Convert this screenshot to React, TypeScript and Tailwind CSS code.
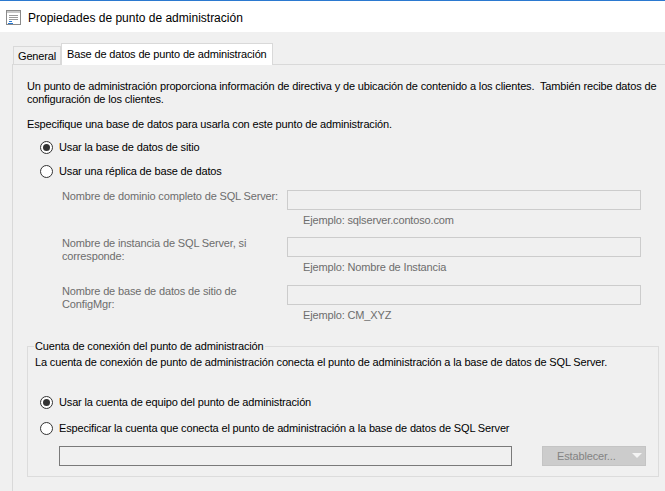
import React from 'react';

function Radio({ checked, label }: { checked?: boolean; label: string }) {
  return (
    <div className="flex items-center h-[16px]">
      <span className="w-[13px] h-[13px] rounded-full border border-[#333333] bg-white flex items-center justify-center shrink-0">
        {checked && <span className="w-[7px] h-[7px] rounded-full bg-[#333333]" />}
      </span>
      <span className="ml-[6px] leading-[13px]">{label}</span>
    </div>
  );
}

function DbRow({ label, example, className }: { label: React.ReactNode; example: string; className?: string }) {
  return (
    <div className={'flex items-start ml-[35px] ' + (className || '')}>
      <div className="w-[225px] leading-[13px] text-[#6d6d6d]">{label}</div>
      <div className="flex flex-col">
        <div className="w-[354px] h-[20px] border border-[#cccccc] bg-[#f0f0f0]" />
        <div className="mt-[4px] ml-[16px] leading-[13px] text-[#6d6d6d]">{example}</div>
      </div>
    </div>
  );
}

export default function App() {
  return (
    <div className="w-[665px] h-[491px] overflow-hidden bg-[#f0f0f0] text-black text-[11px] tracking-[-0.15px] font-['Liberation_Sans',Arial,sans-serif]">
      {/* barra de titulo */}
      <div className="h-[32px] bg-white border-t border-[#2b79d0] flex items-center pl-[6px]">
        <svg width="15" height="15" viewBox="0 0 15 15" className="mt-[1px]">
          <rect x="0.5" y="0.5" width="14" height="14" fill="#ffffff" stroke="#8a8a8a" />
          <rect x="1" y="1" width="13" height="2" fill="#c8c8c8" />
          <rect x="3" y="5" width="9" height="1" fill="#9a9a9a" />
          <rect x="3" y="7" width="9" height="1" fill="#9a9a9a" />
          <rect x="3" y="9" width="9" height="1" fill="#9a9a9a" />
          <rect x="3" y="11" width="3" height="1" fill="#2b79d0" />
          <rect x="2" y="13" width="5" height="1" fill="#2b79d0" />
        </svg>
        <span className="ml-[7px] text-[12px] tracking-normal leading-[14px] mt-[2px]">
          Propiedades de punto de administración
        </span>
      </div>

      {/* pestañas */}
      <div className="pt-[11px] pl-[13px] flex items-end">
        <div className="h-[18px] px-[4px] border border-b-0 border-[#d9d9d9] flex items-center leading-[13px] pt-[2px]">
          General
        </div>
        <div className="relative z-10 -mb-px h-[22px] px-[5px] bg-white border border-b-0 border-[#d9d9d9] flex items-center leading-[13px] pb-[1px]">
          Base de datos de punto de administración
        </div>
      </div>

      {/* panel */}
      <div className="ml-[12px] border-l border-t border-[#d9d9d9] h-[440px] pl-[14px] pt-[15px]">
        <p className="leading-[13px]">
          Un punto de administración proporciona información de directiva y de ubicación de contenido a los clientes.&nbsp; También recibe datos de
          <br />
          configuración de los clientes.
        </p>
        <p className="mt-[12px] leading-[13px]">Especifique una base de datos para usarla con este punto de administración.</p>

        <div className="mt-[8px] ml-[13px] flex flex-col gap-[8px]">
          <Radio checked label="Usar la base de datos de sitio" />
          <Radio label="Usar una réplica de base de datos" />
        </div>

        <DbRow className="mt-[11px]" label="Nombre de dominio completo de SQL Server:" example="Ejemplo: sqlserver.contoso.com" />
        <DbRow
          className="mt-[10px]"
          label={<>Nombre de instancia de SQL Server, si<br />corresponde:</>}
          example="Ejemplo: Nombre de Instancia"
        />
        <DbRow
          className="mt-[11px]"
          label={<>Nombre de base de datos de sitio de<br />ConfigMgr:</>}
          example="Ejemplo: CM_XYZ"
        />

        <fieldset className="mt-[18px] w-[632px] border border-[#dcdcdc] pl-[7px] pb-[10px]">
          <legend className="-ml-[1px] px-[1px] leading-[13px]">Cuenta de conexión del punto de administración</legend>
          <p className="mt-[3px] leading-[13px]">
            La cuenta de conexión de punto de administración conecta el punto de administración a la base de datos de SQL Server.
          </p>
          <div className="mt-[25px] ml-[5px] flex flex-col gap-[10px]">
            <Radio checked label="Usar la cuenta de equipo del punto de administración" />
            <Radio label="Especificar la cuenta que conecta el punto de administración a la base de datos de SQL Server" />
          </div>
          <div className="mt-[10px] ml-[24px] flex items-center">
            <div className="w-[453px] h-[20px] border border-[#7a7a7a] bg-[#f0f0f0]" />
            <div className="ml-[30px] w-[104px] h-[20px] bg-[#cccccc] border border-[#c4c4c4] flex items-center text-[#838383]">
              <span className="ml-[14px] leading-[13px]">Establecer...</span>
              <svg width="10" height="6" viewBox="0 0 10 6" className="ml-auto mr-[3px]">
                <path d="M0 0 L10 0 L5 5 Z" fill="#f4f4f4" />
              </svg>
            </div>
          </div>
        </fieldset>
      </div>
    </div>
  );
}
